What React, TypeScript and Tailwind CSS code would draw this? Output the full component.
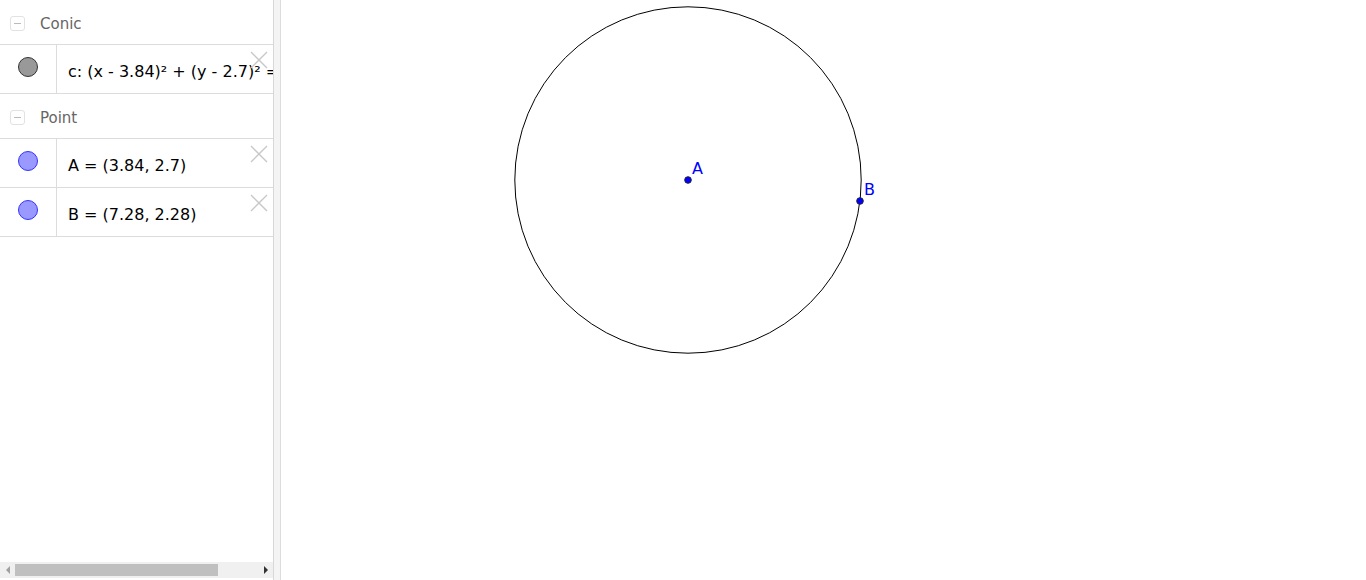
import React from 'react';

const font = { fontFamily: '"DejaVu Sans", "Liberation Sans", sans-serif' };

const GroupHeader = ({ title }: { title: string }) => (
  <div className="h-[45px] flex items-center border-b border-[#dcdcdc] shrink-0">
    <div className="ml-[10px] mt-[3px] w-[15px] h-[15px] border border-[#e2e2e2] rounded-[3px] flex items-center justify-center">
      <div className="w-[7px] h-px bg-[#bbbbbb]" />
    </div>
    <span className="ml-[15px] text-[15px] text-[#666666] pt-[5px]">{title}</span>
  </div>
);

const DeleteX = () => (
  <svg className="absolute right-[5px] top-[6px]" width="18" height="18" viewBox="0 0 18 18">
    <path d="M1 1 L17 17 M17 1 L1 17" stroke="#c8c8c8" strokeWidth="1.4" />
  </svg>
);

const ItemRow = ({ fill, stroke, children }: { fill: string; stroke: string; children: React.ReactNode }) => (
  <div className="relative h-[49px] flex border-b border-[#dcdcdc] shrink-0">
    <div className="w-[57px] border-r border-[#dcdcdc] flex justify-center pt-[12px]">
      <div
        className="w-[20px] h-[20px] rounded-full border-[1.5px]"
        style={{ background: fill, borderColor: stroke }}
      />
    </div>
    <div className="flex-1 pl-[11px] pt-[15px] text-[16px] text-black whitespace-nowrap overflow-hidden">
      {children}
    </div>
    <DeleteX />
  </div>
);

export default function App() {
  return (
    <div className="w-full h-[580px] flex bg-white overflow-hidden" style={font}>
      <div className="w-[274px] h-full border-r border-[#d8d8d8] flex flex-col shrink-0">
        <GroupHeader title="Conic" />
        <ItemRow fill="#999999" stroke="#333333">
          c: (x - 3.84)² + (y - 2.7)² = 141.4
        </ItemRow>
        <GroupHeader title="Point" />
        <ItemRow fill="#9999ff" stroke="#3333ff">
          A = (3.84, 2.7)
        </ItemRow>
        <ItemRow fill="#9999ff" stroke="#3333ff">
          B = (7.28, 2.28)
        </ItemRow>
        <div className="flex-1" />
        <div className="h-[16px] mb-[2px] bg-[#f0f0f0] flex items-center">
          <div className="w-[15px] flex justify-center">
            <div className="w-0 h-0 border-y-[4px] border-y-transparent border-r-[4px] border-r-[#a0a0a0]" />
          </div>
          <div className="w-[203px] h-[12px] bg-[#c0c0c0]" />
          <div className="flex-1" />
          <div className="w-[15px] flex justify-center">
            <div className="w-0 h-0 border-y-[4px] border-y-transparent border-l-[4px] border-l-[#333333]" />
          </div>
        </div>
      </div>
      <div className="w-[7px] h-full bg-[#f4f4f4] border-r border-[#dcdcdc] shrink-0" />
      <div className="flex-1 h-full relative">
        <svg className="absolute left-0 top-0" width="1085" height="580" viewBox="281 0 1085 580">
          <circle cx="688" cy="180" r="173.2" fill="none" stroke="#000000" strokeWidth="1" />
          <circle cx="688" cy="180" r="3.3" fill="#0000ff" stroke="#222244" strokeWidth="1" />
          <circle cx="860" cy="201" r="3.3" fill="#0000ff" stroke="#222244" strokeWidth="1" />
          <text x="692" y="174" fill="#0000ff" fontSize="16" fontFamily="DejaVu Sans, sans-serif">A</text>
          <text x="864" y="195" fill="#0000ff" fontSize="16" fontFamily="DejaVu Sans, sans-serif">B</text>
        </svg>
      </div>
    </div>
  );
}
